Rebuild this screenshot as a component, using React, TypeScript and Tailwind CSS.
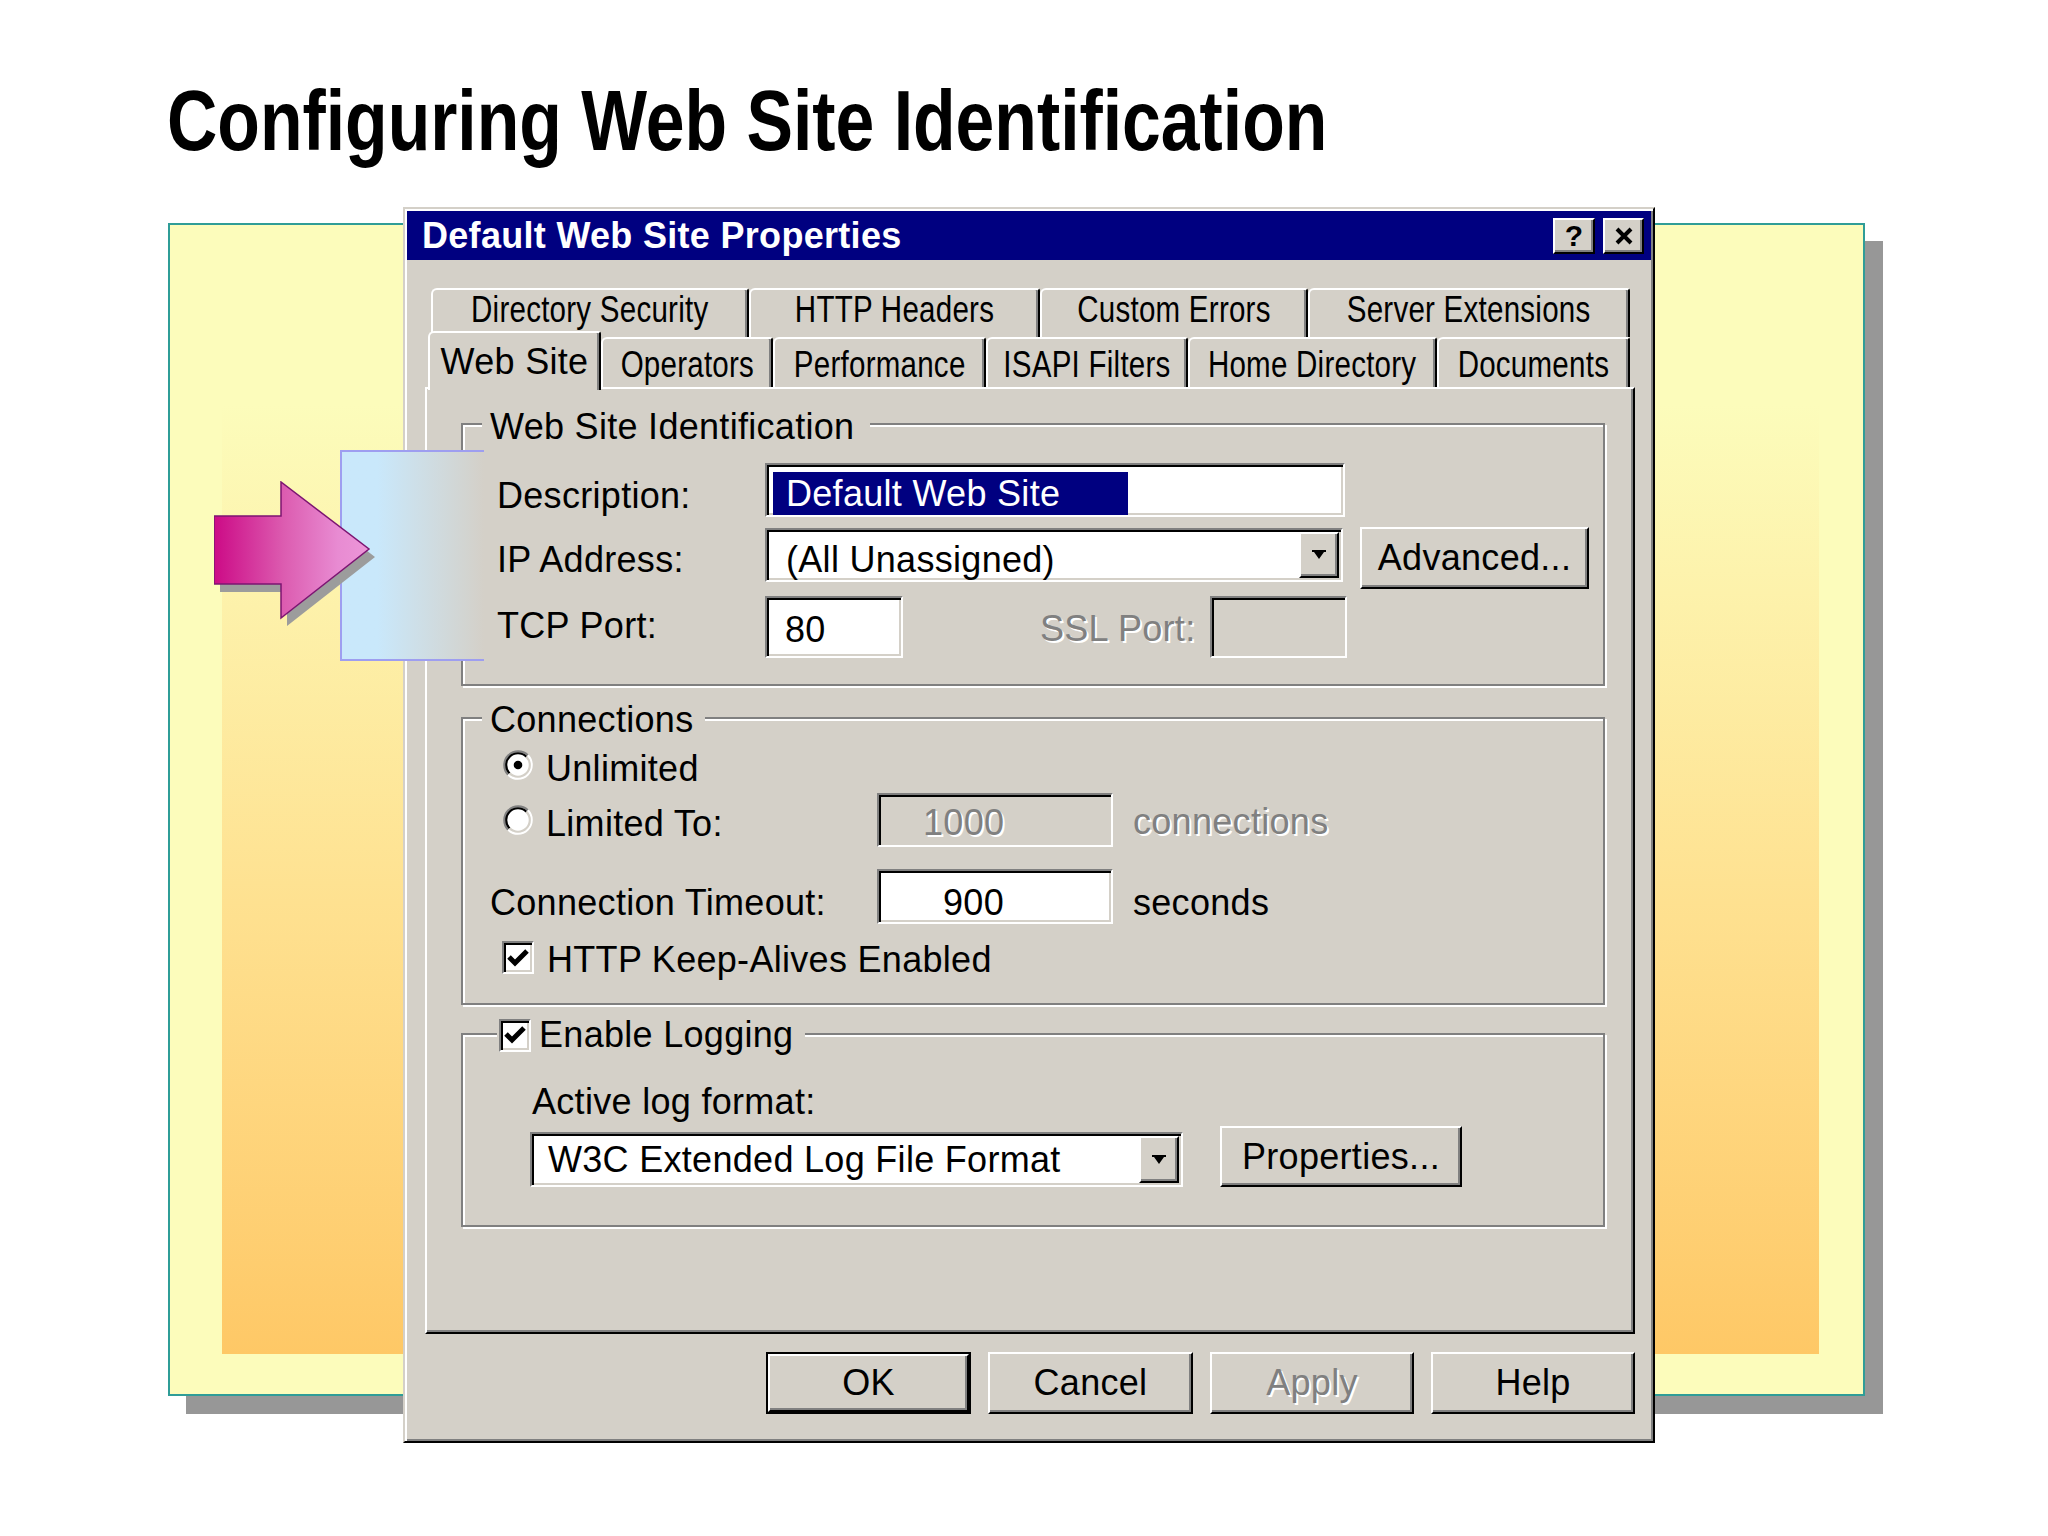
import type { ReactNode } from "react";

const raised =
  "border-2 border-t-white border-l-white border-r-black border-b-black bg-[#d4d0c8] shadow-[inset_-2px_-2px_0_#808080]";
const sunken =
  "border-2 border-t-[#808080] border-l-[#808080] border-r-white border-b-white p-[2px] shadow-[inset_2px_2px_0_#000,inset_-2px_-2px_0_#d4d0c8]";
const etched = "border-2 border-[#808080] shadow-[inset_2px_2px_0_#fff,2px_2px_0_#fff]";
const dimText = "text-[#808080] [text-shadow:2px_2px_0_#fff]";
const body = "text-[36px] leading-none tracking-[0.3px] whitespace-nowrap";

function Radio({ checked }: { checked?: boolean }) {
  return (
    <svg width="30" height="30" viewBox="0 0 28 28" className="shrink-0">
      <circle cx="14" cy="14" r="12" fill="#fff" />
      <path d="M4.81 23.19A13 13 0 0 1 23.19 4.81" stroke="#808080" strokeWidth="2" fill="none" />
      <path d="M23.19 4.81A13 13 0 0 1 4.81 23.19" stroke="#fff" strokeWidth="2" fill="none" />
      <path d="M6.22 21.78A11 11 0 0 1 21.78 6.22" stroke="#000" strokeWidth="2" fill="none" />
      <path d="M21.78 6.22A11 11 0 0 1 6.22 21.78" stroke="#d4d0c8" strokeWidth="2" fill="none" />
      {checked ? <circle cx="14" cy="14" r="4" fill="#000" /> : null}
    </svg>
  );
}

function CheckBox() {
  return (
    <div className={`${sunken} flex h-[33px] w-[32px] shrink-0 items-center justify-center bg-white`}>
      <svg width="22" height="20" viewBox="0 0 22 20">
        <path d="M2 9l6 6L20 3" stroke="#000" strokeWidth="5" fill="none" />
      </svg>
    </div>
  );
}

function DropButton() {
  return (
    <div className={`${raised} flex h-full w-[40px] shrink-0 items-center justify-center`}>
      <svg width="14" height="10" viewBox="0 0 14 10">
        <path d="M0 0h14v2h-2l-5 7-5-7H0z" fill="#000" />
      </svg>
    </div>
  );
}

function Button({
  children,
  className = "",
  dim,
}: {
  children: ReactNode;
  className?: string;
  dim?: boolean;
}) {
  return (
    <div className={`${raised} flex items-center justify-center ${body} ${dim ? dimText : "text-black"} ${className}`}>
      {children}
    </div>
  );
}

// the slide uses Arial Narrow here; no narrow face is installed, so squeeze the regular one
function Narrow({ children }: { children: ReactNode }) {
  return <span className="inline-block scale-x-[0.82]">{children}</span>;
}

function Tab({ label, w, row }: { label: string; w: number; row: 1 | 2 }) {
  return (
    <div
      style={{ width: w }}
      className={`flex shrink-0 justify-center rounded-tl-[6px] rounded-tr-[3px] border-l-2 border-t-2 border-r-2 border-l-white border-t-white border-r-black bg-[#d4d0c8] shadow-[inset_-2px_0_0_#808080] ${body} ${
        row === 1 ? "h-[49px] pt-[2px]" : "h-[50px] pt-[8px]"
      }`}
    >
      <Narrow>{label}</Narrow>
    </div>
  );
}

function Tabs() {
  const top: [string, number][] = [
    ["Directory Security", 318],
    ["HTTP Headers", 291],
    ["Custom Errors", 268],
    ["Server Extensions", 322],
  ];
  const bottom: [string, number][] = [
    ["Operators", 172],
    ["Performance", 213],
    ["ISAPI Filters", 202],
    ["Home Directory", 249],
    ["Documents", 193],
  ];
  return (
    <div>
      <div className="ml-[6px] flex h-[49px]">
        {top.map(([label, w]) => (
          <Tab key={label} label={label} w={w} row={1} />
        ))}
      </div>
      <div className="-mt-[6px] ml-[3px] flex h-[56px] items-end">
        <div
          className={`relative z-10 -mb-[3px] flex h-[59px] w-[173px] shrink-0 justify-center rounded-tl-[6px] rounded-tr-[3px] border-l-2 border-t-2 border-r-2 border-l-white border-t-white border-r-black bg-[#d4d0c8] pt-[11px] shadow-[inset_-2px_0_0_#808080] ${body}`}
        >
          Web Site
        </div>
        {bottom.map(([label, w]) => (
          <Tab key={label} label={label} w={w} row={2} />
        ))}
      </div>
    </div>
  );
}

function GroupLabel({ children, className = "" }: { children: ReactNode; className?: string }) {
  return (
    <div
      className={`absolute top-0 flex h-[36px] -translate-y-1/2 items-center bg-[#d4d0c8] ${body} ${className}`}
    >
      {children}
    </div>
  );
}

function Identification() {
  return (
    <div className={`${etched} relative w-[1144px] pb-[26px] pl-[34px] pt-[38px]`}>
      <GroupLabel className="left-[19px] pl-[8px] pr-[16px] pt-[4px]">Web Site Identification</GroupLabel>

      <div className="flex h-[54px] items-start">
        <div className={`w-[268px] pt-[15px] ${body}`}>Description:</div>
        <div className={`${sunken} h-[54px] w-[580px] bg-white`}>
          <div className={`ml-[4px] mt-[5px] flex h-[43px] w-[355px] items-center bg-[#000080] pl-[13px] text-white ${body}`}>
            Default Web Site
          </div>
        </div>
      </div>

      <div className="mt-[11px] flex h-[54px] items-start">
        <div className={`w-[268px] pt-[14px] ${body}`}>IP Address:</div>
        <div className={`${sunken} flex h-[54px] w-[578px] bg-white`}>
          <div className={`flex-1 pl-[17px] pt-[10px] ${body}`}>(All Unassigned)</div>
          <DropButton />
        </div>
        <Button className="-mt-[1px] ml-[17px] h-[62px] w-[229px]">Advanced...</Button>
      </div>

      <div className="mt-[14px] flex h-[62px] items-start">
        <div className={`w-[268px] pt-[12px] ${body}`}>TCP Port:</div>
        <div className={`${sunken} h-[62px] w-[138px] bg-white`}>
          <div className={`pl-[16px] pt-[12px] ${body}`}>80</div>
        </div>
        <div className={`ml-[137px] w-[170px] pt-[15px] ${body} ${dimText}`}>SSL Port:</div>
        <div className={`${sunken} h-[62px] w-[137px] bg-[#d4d0c8]`} />
      </div>
    </div>
  );
}

function Connections() {
  return (
    <div className={`${etched} relative mt-[31px] w-[1144px] pb-[28px] pt-[31px]`}>
      <GroupLabel className="left-[19px] pl-[8px] pr-[12px] pt-[2px]">Connections</GroupLabel>

      <div className="flex h-[32px] items-start pl-[40px]">
        <Radio checked />
        <div className={`ml-[13px] mt-[1px] ${body}`}>Unlimited</div>
      </div>

      <div className="mt-[11px] flex h-[54px] items-start">
        <div className="flex w-[414px] items-start pl-[40px]">
          <div className="mt-[12px]">
            <Radio />
          </div>
          <div className={`ml-[13px] mt-[13px] ${body}`}>Limited To:</div>
        </div>
        <div className={`${sunken} h-[54px] w-[236px] bg-[#d4d0c8]`}>
          <div className={`pl-[42px] pt-[8px] ${body} ${dimText}`}>1000</div>
        </div>
        <div className={`ml-[20px] mt-[11px] ${body} ${dimText}`}>connections</div>
      </div>

      <div className="mt-[22px] flex h-[55px] items-start">
        <div className={`w-[414px] pl-[27px] pt-[16px] ${body}`}>Connection Timeout:</div>
        <div className={`${sunken} h-[55px] w-[236px] bg-white`}>
          <div className={`pl-[62px] pt-[12px] ${body}`}>900</div>
        </div>
        <div className={`ml-[20px] mt-[16px] ${body}`}>seconds</div>
      </div>

      <div className="mt-[17px] flex h-[34px] items-start pl-[39px]">
        <CheckBox />
        <div className={`ml-[13px] mt-[1px] ${body}`}>HTTP Keep-Alives Enabled</div>
      </div>
    </div>
  );
}

function Logging() {
  return (
    <div className={`${etched} relative mt-[28px] w-[1144px] pb-[38px] pl-[69px] pt-[49px]`}>
      <GroupLabel className="left-[34px] pl-[2px] pr-[12px]">
        <CheckBox />
        <span className="ml-[8px]">Enable Logging</span>
      </GroupLabel>

      <div className={body}>Active log format:</div>
      <div className="-ml-[2px] mt-[12px] flex h-[55px] items-start">
        <div className={`${sunken} flex h-[55px] w-[653px] bg-white`}>
          <div className={`flex-1 pl-[14px] pt-[6px] ${body}`}>W3C Extended Log File Format</div>
          <DropButton />
        </div>
        <Button className="-mt-[6px] ml-[37px] h-[61px] w-[242px]">Properties...</Button>
      </div>
    </div>
  );
}

function Dialog() {
  return (
    <div className="[grid-area:1/1] ml-[235px] w-[1252px] self-start border-2 border-t-[#d4d0c8] border-l-[#d4d0c8] border-r-black border-b-black bg-[#d4d0c8] p-[2px] shadow-[inset_2px_2px_0_#fff,inset_-2px_-2px_0_#808080]">
      <div className="flex h-[49px] items-center bg-[#000080] pl-[15px] pr-[7px]">
        <div className="text-[36px] font-bold leading-none text-white tracking-[0.3px]">Default Web Site Properties</div>
        <div className="ml-auto flex gap-[8px]">
          <div className={`${raised} flex h-[36px] w-[42px] items-center justify-center text-[30px] font-bold leading-none`}>
            ?
          </div>
          <div className={`${raised} flex h-[36px] w-[41px] items-center justify-center`}>
            <svg width="18" height="18" viewBox="0 0 18 18">
              <path d="M2 2l14 14M16 2L2 16" stroke="#000" strokeWidth="4" />
            </svg>
          </div>
        </div>
      </div>

      <div className="pb-[25px] pl-[18px] pr-[16px] pt-[28px]">
        <Tabs />
        <div className="h-[947px] border-2 border-t-white border-l-white border-r-black border-b-black pl-[34px] pt-[34px] shadow-[inset_-2px_-2px_0_#808080]">
          <Identification />
          <Connections />
          <Logging />
        </div>
        <div className="mt-[18px] flex justify-end gap-[17px]">
          <div className="h-[62px] w-[205px] border-2 border-black">
            <Button className="h-full w-full">OK</Button>
          </div>
          <Button className="h-[62px] w-[205px]">Cancel</Button>
          <Button className="h-[62px] w-[204px]" dim>
            Apply
          </Button>
          <Button className="h-[62px] w-[204px]">Help</Button>
        </div>
      </div>
    </div>
  );
}

function Arrow() {
  return (
    <svg width="170" height="150" viewBox="0 0 170 150" className="absolute left-[46px] top-[274px] z-20">
      <defs>
        <linearGradient id="arrowFill" x1="0" x2="1" y1="0" y2="0">
          <stop offset="0" stopColor="#cc0a86" />
          <stop offset="0.45" stopColor="#dc5cb0" />
          <stop offset="0.8" stopColor="#e88bd2" />
          <stop offset="1" stopColor="#ec96d8" />
        </linearGradient>
      </defs>
      <polygon points="6,43 73,43 73,8 161,76 73,145 73,111 6,111" fill="#9c9c9c" />
      <polygon
        points="0,35 67,35 67,1 155,68 67,137 67,103 0,103"
        fill="url(#arrowFill)"
        stroke="#7c1572"
        strokeWidth="1.5"
      />
    </svg>
  );
}

export default function App() {
  return (
    <div className="h-[1536px] w-[2048px] overflow-hidden bg-white font-['Liberation_Sans',Arial,sans-serif] text-black">
      <h1 className="pl-[167px] pt-[78px] text-[85px] font-bold leading-none">
        <span className="inline-block origin-left scale-x-[0.82] whitespace-nowrap">
          Configuring Web Site Identification
        </span>
      </h1>

      <div className="relative ml-[168px] mt-[44px] grid w-[1715px]">
        <div className="[grid-area:1/1] mt-[16px] flex h-[1173px] w-[1697px] border-2 border-[#2f9d97] bg-[#fcfcbb] pb-[40px] pl-[52px] pr-[44px] pt-[180px] shadow-[18px_18px_0_#979797]">
          <div className="flex-1 bg-linear-to-b from-[#fcfcbb] to-[#fec866]" />
        </div>

        <Dialog />

        <div className="absolute left-[172px] top-[243px] z-10 h-[211px] w-[144px] border-y-2 border-l-2 border-[#9e9ef0] bg-linear-to-r from-[#c9e8fb] from-25% to-[#d4d0c8]" />
        <Arrow />
      </div>
    </div>
  );
}
